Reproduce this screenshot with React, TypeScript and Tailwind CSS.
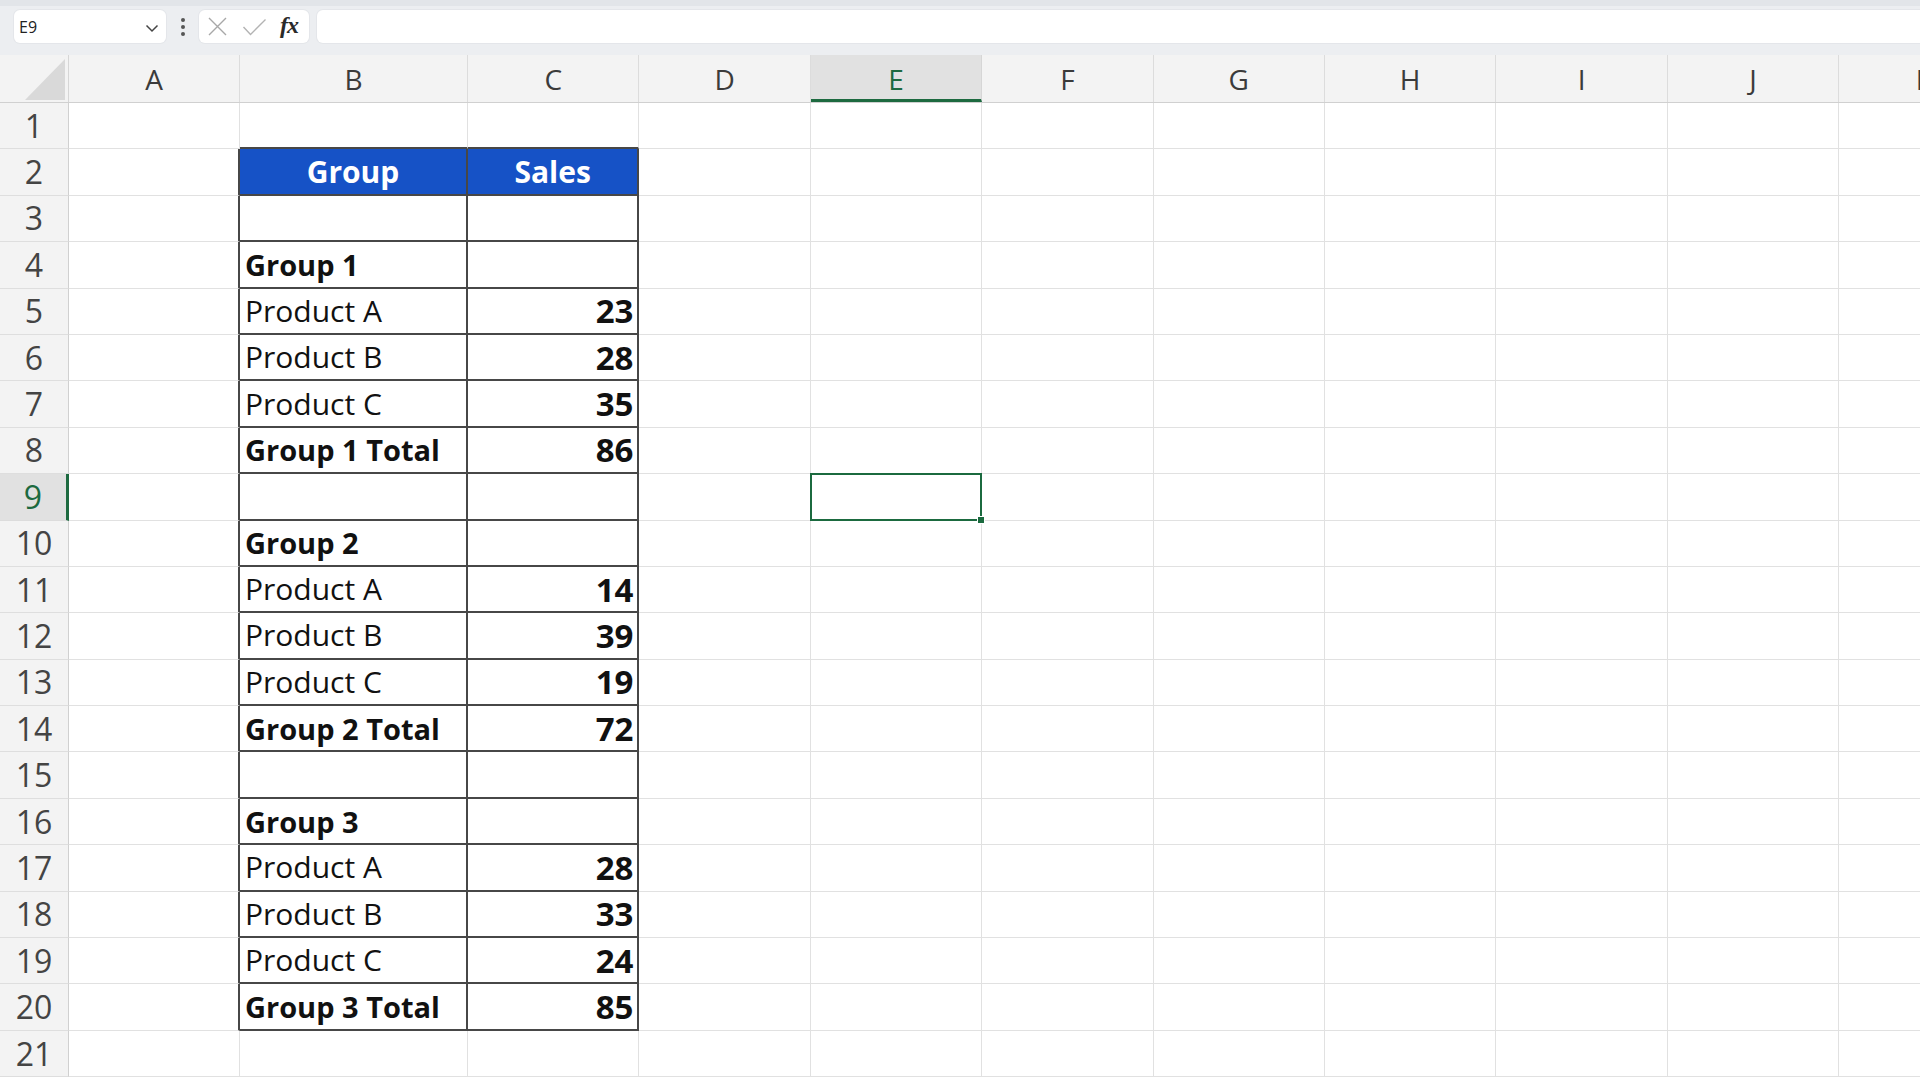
import React from 'react';

type Col = { l: string; w: string };
const COLS: Col[] = [
  { l: 'A', w: 'w-[171px]' },
  { l: 'B', w: 'w-[228px]' },
  { l: 'C', w: 'w-[171.4px]' },
  { l: 'D', w: 'w-[171.4px]' },
  { l: 'E', w: 'w-[171.4px]' },
  { l: 'F', w: 'w-[171.4px]' },
  { l: 'G', w: 'w-[171.4px]' },
  { l: 'H', w: 'w-[171.4px]' },
  { l: 'I', w: 'w-[171.4px]' },
  { l: 'J', w: 'w-[171.4px]' },
  { l: 'K', w: 'w-[171.4px]' },
];

type Kind = 'head' | 'bold' | 'norm' | 'num' | 'empty';
type Cell = { t: string; k: Kind };

const E: Cell = { t: '', k: 'empty' };
const TABLE: Record<number, [Cell, Cell]> = {
  2: [{ t: 'Group', k: 'head' }, { t: 'Sales', k: 'head' }],
  3: [E, E],
  4: [{ t: 'Group 1', k: 'bold' }, E],
  5: [{ t: 'Product A', k: 'norm' }, { t: '23', k: 'num' }],
  6: [{ t: 'Product B', k: 'norm' }, { t: '28', k: 'num' }],
  7: [{ t: 'Product C', k: 'norm' }, { t: '35', k: 'num' }],
  8: [{ t: 'Group 1 Total', k: 'bold' }, { t: '86', k: 'num' }],
  9: [E, E],
  10: [{ t: 'Group 2', k: 'bold' }, E],
  11: [{ t: 'Product A', k: 'norm' }, { t: '14', k: 'num' }],
  12: [{ t: 'Product B', k: 'norm' }, { t: '39', k: 'num' }],
  13: [{ t: 'Product C', k: 'norm' }, { t: '19', k: 'num' }],
  14: [{ t: 'Group 2 Total', k: 'bold' }, { t: '72', k: 'num' }],
  15: [E, E],
  16: [{ t: 'Group 3', k: 'bold' }, E],
  17: [{ t: 'Product A', k: 'norm' }, { t: '28', k: 'num' }],
  18: [{ t: 'Product B', k: 'norm' }, { t: '33', k: 'num' }],
  19: [{ t: 'Product C', k: 'norm' }, { t: '24', k: 'num' }],
  20: [{ t: 'Group 3 Total', k: 'bold' }, { t: '85', k: 'num' }],
};

const ROWS = Array.from({ length: 21 }, (_, i) => i + 1);

function Toolbar() {
  return (
    <div className="h-[55px] shrink-0 bg-[#eceef1] border-t-[6px] border-[#e2e5e9] flex items-start pt-[4px] pl-[14px]">
      <div className="w-[152px] h-[33px] bg-white rounded-[6px] flex items-center justify-between pl-[5px] pr-[7px] shadow-[0_0_0_1px_#e4e6ea]">
        <span className="text-[16px] text-[#222] font-['Open_Sans',sans-serif]">E9</span>
        <svg width="14" height="9" viewBox="0 0 14 9" className="mt-[3px]">
          <polyline points="1.5,1.5 7,7 12.5,1.5" fill="none" stroke="#444" strokeWidth="1.5" />
        </svg>
      </div>
      <div className="w-[33px] h-[33px] flex flex-col items-center justify-center gap-[3px]">
        <div className="w-[4px] h-[4px] rounded-full bg-[#555]" />
        <div className="w-[4px] h-[4px] rounded-full bg-[#555]" />
        <div className="w-[4px] h-[4px] rounded-full bg-[#555]" />
      </div>
      <div className="w-[110px] h-[33px] bg-white rounded-[6px] flex items-center pl-[8px] shadow-[0_0_0_1px_#e4e6ea]">
        <svg width="21" height="21" viewBox="0 0 21 21">
          <path d="M2 2 L19 19 M19 2 L2 19" stroke="#a8a8a8" strokeWidth="1.4" fill="none" />
        </svg>
        <svg width="25" height="18" viewBox="0 0 25 18" className="ml-[14px]">
          <polyline points="1.5,9 8.5,16.5 23.5,1.5" stroke="#b3b3b3" strokeWidth="1.4" fill="none" />
        </svg>
        <span className="ml-[13px] text-[24px] leading-none italic font-bold text-[#2a2a2a] font-['Liberation_Serif',serif] tracking-[-1px] -mt-[3px]">
          fx
        </span>
      </div>
      <div className="flex-1 ml-[8px] h-[33px] bg-white rounded-l-[6px] shadow-[0_0_0_1px_#e4e6ea]" />
    </div>
  );
}

function HeaderRow() {
  return (
    <div className="flex h-[48px] shrink-0 bg-[#f3f3f3] border-b border-[#d0d0d0]">
      <div className="w-[69px] shrink-0 h-full relative border-r border-[#d6d6d6]">
        <svg width="69" height="48" viewBox="0 0 69 48" className="absolute left-0 top-0">
          <polygon points="25,45 65,45 65,4" fill="#d9d9d9" />
        </svg>
      </div>
      {COLS.map((c) => {
        const sel = c.l === 'E';
        return (
          <div
            key={c.l}
            className={
              c.w +
              ' shrink-0 h-full flex items-center justify-center text-[28px] font-["Open_Sans",sans-serif] border-r ' +
              (sel
                ? 'bg-[#e1e1e1] text-[#1d6a40] border-r-[#d6d6d6] border-b-[3px] border-b-[#1d6a40] pt-[3px]'
                : 'text-[#3b3b3b] border-[#dcdcdc]')
            }
          >
            {c.l}
          </div>
        );
      })}
    </div>
  );
}

function CellView({ cell }: { cell: Cell }) {
  if (cell.k === 'empty') return null;
  if (cell.k === 'head')
    return (
      <span className="w-full text-center text-white font-bold text-[30px] leading-none font-['Open_Sans',sans-serif]">
        {cell.t}
      </span>
    );
  if (cell.k === 'num')
    return (
      <span className="w-full text-right pr-[4px] text-[#111] font-bold text-[33px] leading-none font-['Open_Sans',sans-serif]">
        {cell.t}
      </span>
    );
  if (cell.k === 'bold')
    return (
      <span className="pl-[5px] text-[#111] font-bold text-[29px] leading-none font-['Open_Sans',sans-serif] whitespace-nowrap">
        {cell.t}
      </span>
    );
  return (
    <span className="pl-[5px] text-[#111] text-[30px] leading-none font-['Open_Sans',sans-serif] whitespace-nowrap">
      {cell.t}
    </span>
  );
}

function DataRow({ r }: { r: number }) {
  const selRow = r === 9;
  const inTable = r >= 2 && r <= 20;
  return (
    <div className="flex h-[46.4px] shrink-0">
      <div
        className={
          'w-[69px] shrink-0 h-full flex items-center justify-center text-[32px] font-["Open_Sans",sans-serif] border-b ' +
          (selRow
            ? 'bg-[#e1e1e1] text-[#1d6a40] border-b-[#dcdcdc] border-r-[3px] border-r-[#1d6a40]'
            : 'bg-[#f3f3f3] text-[#444] border-[#dedede] border-r border-r-[#d0d0d0]')
        }
      >
        {r}
      </div>
      {COLS.map((c, ci) => {
        const isB = c.l === 'B';
        const isC = c.l === 'C';
        const rightDark = inTable && (c.l === 'A' || isB || isC);
        const bottomDark = (isB || isC) && r >= 1 && r <= 20;
        const cell = inTable && (isB || isC) ? TABLE[r][isB ? 0 : 1] : E;
        const head = cell.k === 'head';
        const selected = r === 9 && c.l === 'E';
        const cls =
          c.w +
          ' shrink-0 h-full flex items-center relative ' +
          (rightDark ? 'border-r-2 border-r-[#474747] ' : 'border-r border-r-[#e1e1e1] ') +
          (bottomDark ? 'border-b-2 border-b-[#474747] ' : 'border-b border-b-[#e1e1e1] ') +
          (head ? 'bg-[#1652c6]' : 'bg-white');
        return (
          <div key={ci} className={cls}>
            <CellView cell={cell} />
            {selected && (
              <div className="absolute z-10 -left-[1px] -top-[1px] -right-[1px] -bottom-[1px] border-2 border-[#1b6a3f]">
                <div className="absolute -right-[5px] -bottom-[5px] w-[8px] h-[8px] bg-[#1b6a3f] border border-white" />
              </div>
            )}
          </div>
        );
      })}
    </div>
  );
}

export default function App() {
  return (
    <div className="w-[1920px] h-[1080px] overflow-hidden bg-white flex flex-col">
      <Toolbar />
      <HeaderRow />
      <div className="flex flex-col">
        {ROWS.map((r) => (
          <DataRow key={r} r={r} />
        ))}
      </div>
    </div>
  );
}
